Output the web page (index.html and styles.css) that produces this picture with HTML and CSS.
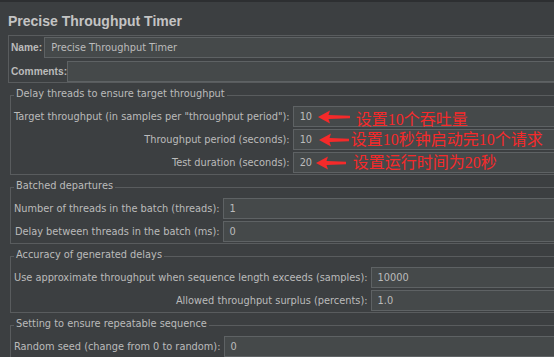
FILE: index.html
```html
<!DOCTYPE html>
<html lang="en">
<head>
  <meta charset="UTF-8">
  <title>Precise Throughput Timer</title>
  <link rel="stylesheet" href="styles.css">
</head>
<body>
  <div class="top-strip"></div>
  <div class="panel">
    <h1 class="title">Precise Throughput Timer</h1>

    <div class="name-box">
      <div class="name-row">
        <span class="bold-label">Name:</span>
        <div class="field name-field">Precise Throughput Timer</div>
      </div>
      <div class="name-row">
        <span class="bold-label">Comments:</span>
        <div class="field comments-field"></div>
      </div>
    </div>

    <div class="group">
      <span class="group-title">Delay threads to ensure target throughput</span>
      <div class="rows">
        <span class="label">Target throughput (in samples per "throughput period"):</span>
        <div class="field">
          <span class="value">10</span>
          <svg class="arrow" width="32" height="14" viewBox="0 0 32 14"><path d="M0 7 L12 0.5 L10.5 5 L32 5.8 L32 8.2 L10.5 9 L12 13.5 Z"/></svg>
          <span class="note note-low">设置10个吞吐量</span>
        </div>

        <span class="label">Throughput period (seconds):</span>
        <div class="field">
          <span class="value">10</span>
          <svg class="arrow arrow-short" width="30" height="14" viewBox="0 0 30 14"><path d="M0 7 L12 0.5 L10.5 5 L30 5.8 L30 8.2 L10.5 9 L12 13.5 Z"/></svg>
          <span class="note note-tight">设置10秒钟启动完10个请求</span>
        </div>

        <span class="label">Test duration (seconds):</span>
        <div class="field">
          <span class="value value-narrow">20</span>
          <svg class="arrow" width="30" height="14" viewBox="0 0 30 14"><path d="M0 7 L12 0.5 L10.5 5 L30 5.8 L30 8.2 L10.5 9 L12 13.5 Z"/></svg>
          <span class="note">设置运行时间为20秒</span>
        </div>
      </div>
    </div>

    <div class="group">
      <span class="group-title">Batched departures</span>
      <div class="rows">
        <span class="label">Number of threads in the batch (threads):</span>
        <div class="field">1</div>
        <span class="label">Delay between threads in the batch (ms):</span>
        <div class="field">0</div>
      </div>
    </div>

    <div class="group">
      <span class="group-title">Accuracy of generated delays</span>
      <div class="rows">
        <span class="label">Use approximate throughput when sequence length exceeds (samples):</span>
        <div class="field">10000</div>
        <span class="label">Allowed throughput surplus (percents):</span>
        <div class="field">1.0</div>
      </div>
    </div>

    <div class="group">
      <span class="group-title">Setting to ensure repeatable sequence</span>
      <div class="rows">
        <span class="label">Random seed (change from 0 to random):</span>
        <div class="field">0</div>
      </div>
    </div>
  </div>
</body>
</html>
```

FILE: styles.css
```css
:root {
  --background: #3c3f41;
  --strip: #2d2f31;
  --field: #45494a;
  --field-border: #5e6264;
  --line: #595c5e;
  --text: #bbbbbb;
  --red: #f52a2a;
}

body {
  margin: 0;
  background-color: var(--background);
  color: var(--text);
  font-family: "DejaVu Sans", Verdana, sans-serif;
  font-size: 9.8px;
  overflow: hidden;
}

.top-strip {
  height: 2px;
  background-color: var(--strip);
}

.panel {
  width: 700px;
  padding-left: 8px;
}

.title {
  margin: 0;
  padding: 11px 0 5px 0;
  font-family: "Liberation Sans", Arial, sans-serif;
  font-size: 14px;
  line-height: 17px;
  font-weight: bold;
  color: #c4c4c4;
}

/* Name / comments box */
.name-box {
  border: 1px solid var(--line);
  padding: 1px 0 0 1px;
}

.name-row {
  display: flex;
  align-items: center;
}

.name-row + .name-row {
  margin-top: 3px;
}

.bold-label {
  font-family: "Liberation Sans", Arial, sans-serif;
  font-size: 10.2px;
  font-weight: bold;
  padding-left: 1px;
}

.name-row .field {
  flex: 1;
}

.name-field {
  height: 22px;
  margin-left: 2px;
}

.comments-field {
  height: 18px;
  border-top: none;
  border-left: none;
}

/* Titled groups */
.group {
  margin: 12px 0 0 2px;
  border: 1px solid var(--line);
  padding: 0 0 1px 3px;
}

.group-title {
  display: block;
  width: max-content;
  height: 14px;
  margin-top: -9px;
  padding: 0 2px;
  line-height: 14px;
  background-color: var(--background);
}

.rows {
  display: grid;
  grid-template-columns: auto 1fr;
  row-gap: 2px;
  align-items: center;
  margin-top: 5px;
}

.label {
  text-align: right;
  padding-right: 3px;
  white-space: nowrap;
}

.field {
  box-sizing: border-box;
  height: 21px;
  display: flex;
  align-items: center;
  padding-left: 6px;
  background-color: var(--field);
  border: 1px solid var(--field-border);
  white-space: nowrap;
}

/* Red annotations */
.value {
  width: 18px;
}

.value-narrow {
  width: 16px;
}

.arrow {
  fill: var(--red);
  flex-shrink: 0;
}

.arrow-short {
  margin-left: 1px;
}

.note {
  margin-left: 7px;
  color: var(--red);
  font-family: "Liberation Serif", "Noto Sans CJK SC", serif;
  font-size: 16px;
  line-height: 1;
}

.note-low {
  margin-top: 6px;
  margin-left: 6px;
}

.note-tight {
  margin-left: 2px;
  font-size: 16px;
}
```
